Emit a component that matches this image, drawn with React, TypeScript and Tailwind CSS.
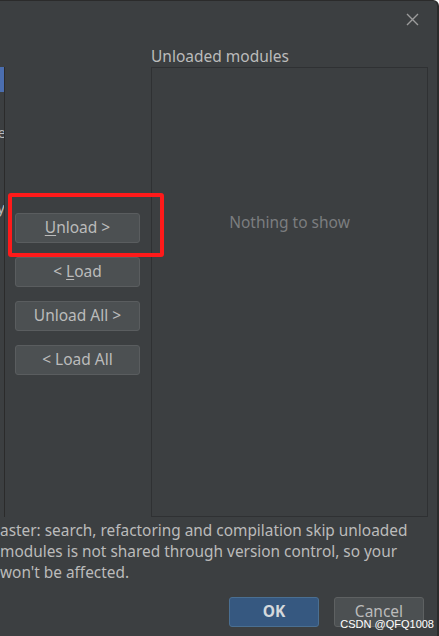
// App.tsx
import React from 'react';

function DialogButton({ children, primary }: { children: React.ReactNode; primary?: boolean }) {
  return (
    <button
      className={
        primary
          ? 'w-[90px] h-[30px] rounded-[3px] border border-[#4a6f92] bg-[#365880] text-[#d4d8dc] text-[15.5px] font-bold'
          : 'w-[90px] h-[30px] rounded-[3px] border border-[#5e6162] bg-[#4c5052] text-[#bbbbbb] text-[15.5px]'
      }
    >
      {children}
    </button>
  );
}

function MoveButton({ children }: { children: React.ReactNode }) {
  return (
    <button className="w-[125px] h-[30px] rounded-[3px] border border-[#5a5d5f] bg-[#4c5052] text-[#bbbbbb] text-[15.5px] leading-none">
      {children}
    </button>
  );
}

export default function App() {
  return (
    <div className="relative w-[439px] h-[636px] overflow-hidden bg-[#3c3f41] border-t border-r-2 border-[#2b2b2b] rounded-tr-[6px] text-[#bbbbbb] font-['Segoe_UI','Noto_Sans',sans-serif]">
      {/* title bar */}
      <div className="flex justify-end h-[47px] pt-[12px] pr-[18px]">
        <svg width="13" height="13" viewBox="0 0 13 13" fill="none">
          <path d="M1 1L12 12M12 1L1 12" stroke="#9c9c9c" strokeWidth="1.4" />
        </svg>
      </div>

      {/* main */}
      <div className="flex h-[469px]">
        <div className="w-[5px] mt-[19px] border-r border-[#2b2b2b] overflow-hidden">
          <div className="h-[25px] bg-[#4b6eaf]" />
          <div className="h-[30px]" />
          <div className="flex justify-end text-[15px] leading-[20px] -mr-[2px]">e</div>
          <div className="h-[55px]" />
          <div className="flex justify-end text-[15px] leading-[20px] -mr-[1px]">y</div>
        </div>

        <div className="ml-[10px] w-[125px] pt-[165px] flex flex-col gap-[14px]">
          <MoveButton>
            <span className="underline underline-offset-2">U</span>nload &gt;
          </MoveButton>
          <MoveButton>
            &lt; <span className="underline underline-offset-2">L</span>oad
          </MoveButton>
          <MoveButton>Unload All &gt;</MoveButton>
          <MoveButton>&lt; Load All</MoveButton>
        </div>

        <div className="ml-[11px] w-[277px] flex flex-col">
          <div className="h-[19px] text-[15.5px] leading-[17px]">Unloaded modules</div>
          <div className="flex-1 border border-[#2f3133] pt-[144px] text-center text-[15.5px] leading-[20px] text-[#7b7d7f]">
            Nothing to show
          </div>
        </div>
      </div>

      {/* description */}
      <div className="mt-[3px] text-[15.4px] leading-[21px] whitespace-nowrap">
        <div>aster: search, refactoring and compilation skip unloaded</div>
        <div>modules is not shared through version control, so your</div>
        <div>won't be affected.</div>
      </div>

      {/* footer */}
      <div className="flex justify-end gap-[15px] pr-[13px] mt-[14px]">
        <DialogButton primary>OK</DialogButton>
        <DialogButton>Cancel</DialogButton>
      </div>

      {/* annotation */}
      <div className="absolute left-[8px] top-[192px] w-[156px] h-[64px] border-[4px] border-[#ff1a1a] rounded-[3px]" />

      {/* watermark */}
      <div className="absolute right-[3px] bottom-[6px] text-[11px] leading-none text-white font-['Liberation_Sans',sans-serif] [text-shadow:0_0_1px_#555]">
        CSDN @QFQ1008
      </div>
    </div>
  );
}
